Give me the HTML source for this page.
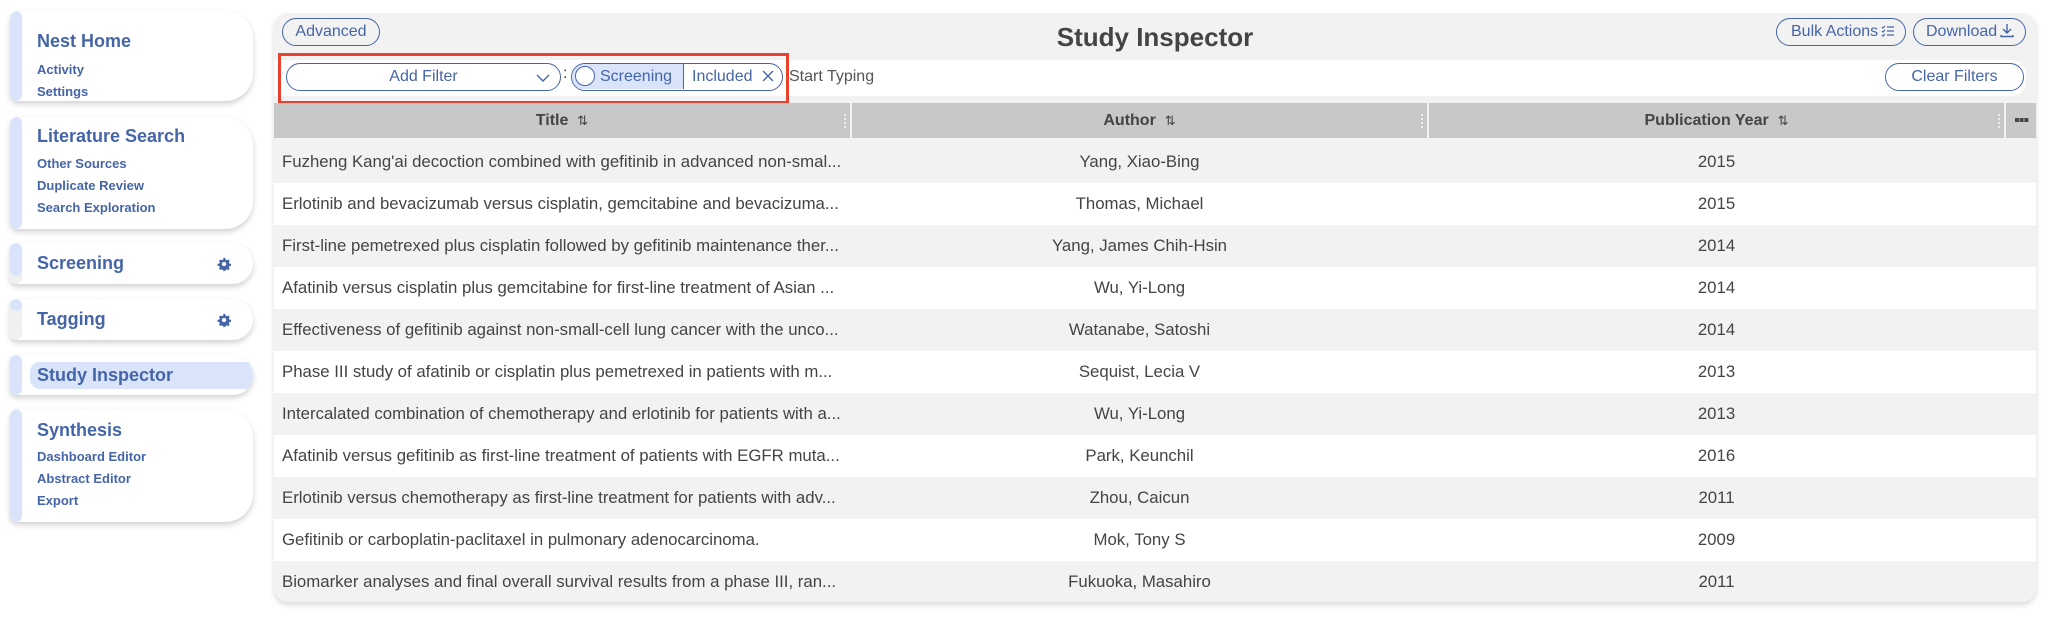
<!DOCTYPE html>
<html><head><meta charset="utf-8"><style>
*{box-sizing:border-box;margin:0;padding:0}
body{width:2048px;height:629px;background:#fff;font-family:"Liberation Sans",Arial,sans-serif;position:relative;overflow:hidden}
.card{position:absolute;left:10px;width:243px;background:#fff;border-radius:8px 28px 28px 8px;box-shadow:0 3px 6px rgba(0,0,0,.18);overflow:hidden}
.stripe{position:absolute;left:0;top:0;bottom:0;width:12px;background:#f0f0f0;border-radius:8px}
.stripe i{position:absolute;left:0;top:0;width:12px;background:#d9e4fb;border-radius:8px;display:block}
.card .t{position:absolute;left:27px;font-size:18px;font-weight:bold;color:#4565a8}
.card .s{position:absolute;left:27px;font-size:13px;font-weight:bold;color:#4565a8}
.gear{position:absolute;right:22px;width:14px;height:14px}
.main{position:absolute;left:274px;top:13px;width:1762px;height:589px;background:#f2f2f2;border-radius:14px;box-shadow:0 3px 6px rgba(0,0,0,.15);overflow:hidden}
.btn{position:absolute;border:1.5px solid #4565a8;border-radius:14px;color:#4565a8;font-size:16px;text-align:center;line-height:25px;white-space:nowrap}
.hdr{position:absolute;top:90px;height:35px;background:#c8c8c8;font-weight:bold;font-size:16px;color:#444;text-align:center;line-height:35px}
.row{position:absolute;left:0;width:1762px;height:42px;font-size:16.8px;color:#444;line-height:42px}
.row span{position:absolute;white-space:nowrap}
.c1{left:8px}
.c2{left:578px;width:575px;text-align:center}
.c3{left:1155px;width:575px;text-align:center}
.vd{position:absolute;top:11px;width:2px;height:14px;border-left:2px dotted #eee}
</style></head><body>

<div class="card" style="top:11px;height:90px"><div class="stripe"><i style="height:90px"></i></div>
<div class="t" style="top:20px">Nest Home</div><div class="s" style="top:51px">Activity</div><div class="s" style="top:73px">Settings</div></div>

<div class="card" style="top:117px;height:112px"><div class="stripe"><i style="height:112px"></i></div>
<div class="t" style="top:9px">Literature Search</div><div class="s" style="top:39px">Other Sources</div><div class="s" style="top:61px">Duplicate Review</div><div class="s" style="top:83px">Search Exploration</div></div>

<div class="card" style="top:243px;height:41px"><div class="stripe"><i style="height:33px"></i></div>
<div class="t" style="top:10px">Screening</div>
<svg class="gear" style="top:14px" viewBox="0 0 16 16"><path fill="#4565a8" d="M9.4 1l.4 2 1.3.7 1.9-.8 1.4 1.4-.8 1.9.7 1.3 2 .4v2l-2 .4-.7 1.3.8 1.9-1.4 1.4-1.9-.8-1.3.7-.4 2h-2l-.4-2-1.3-.7-1.9.8-1.4-1.4.8-1.9-.7-1.3-2-.4v-2l2-.4.7-1.3-.8-1.9 1.4-1.4 1.9.8 1.3-.7.4-2zM8 5.5a2.5 2.5 0 100 5 2.5 2.5 0 000-5z"/></svg></div>

<div class="card" style="top:299px;height:41px"><div class="stripe"><i style="height:12px"></i></div>
<div class="t" style="top:10px">Tagging</div>
<svg class="gear" style="top:14px" viewBox="0 0 16 16"><path fill="#4565a8" d="M9.4 1l.4 2 1.3.7 1.9-.8 1.4 1.4-.8 1.9.7 1.3 2 .4v2l-2 .4-.7 1.3.8 1.9-1.4 1.4-1.9-.8-1.3.7-.4 2h-2l-.4-2-1.3-.7-1.9.8-1.4-1.4.8-1.9-.7-1.3-2-.4v-2l2-.4.7-1.3-.8-1.9 1.4-1.4 1.9.8 1.3-.7.4-2zM8 5.5a2.5 2.5 0 100 5 2.5 2.5 0 000-5z"/></svg></div>

<div class="card" style="top:355px;height:40px"><div class="stripe"><i style="height:40px"></i></div>
<div style="position:absolute;left:20px;top:7px;width:227px;height:27px;background:#d9e4fb;border-radius:10px"></div>
<div class="t" style="top:10px">Study Inspector</div></div>

<div class="card" style="top:409px;height:113px"><div class="stripe"><i style="height:113px"></i></div>
<div class="t" style="top:11px">Synthesis</div><div class="s" style="top:40px">Dashboard Editor</div><div class="s" style="top:62px">Abstract Editor</div><div class="s" style="top:84px">Export</div></div>

<div class="main">
 <div class="btn" style="left:8px;top:5px;width:98px;height:28px">Advanced</div>
 <div style="position:absolute;left:0;width:1762px;top:9px;text-align:center;font-size:26px;font-weight:bold;color:#444">Study Inspector</div>
 <div class="btn" style="left:1502px;top:5px;width:130px;height:28px;text-align:left;padding-left:14px">Bulk Actions<svg width="14" height="14" viewBox="0 0 14 14" style="vertical-align:-2px;margin-left:3px"><path d="M1 3l1 1 2-2M1 7l1 1 2-2M1 11l1 1 2-2M6 3h7M6 7h7M6 11h7" stroke="#4565a8" stroke-width="1.2" fill="none"/></svg></div>
 <div class="btn" style="left:1639px;top:5px;width:113px;height:28px;text-align:left;padding-left:12px">Download<svg width="16" height="16" viewBox="0 0 16 16" style="vertical-align:-2px;margin-left:2px"><path d="M8 2v9M4 7l4 4 4-4M2 13v1.5h12V13" stroke="#4565a8" stroke-width="1.4" fill="none"/></svg></div>
 <div style="position:absolute;left:0;top:47px;width:1752px;height:36px;background:#fff;border-radius:0 14px 14px 0"></div>
 <div style="position:absolute;left:4px;top:40px;width:511px;height:51px;border:3px solid #e8412d"></div>
 <div class="btn" style="left:12px;top:50px;width:275px;height:28px;background:#fff">Add Filter<svg width="14" height="10" viewBox="0 0 14 10" style="position:absolute;right:10px;top:9px"><path d="M1 2l6 6 6-6" stroke="#4565a8" stroke-width="1.4" fill="none"/></svg></div>
 <div style="position:absolute;left:289px;top:52px;font-size:16px;color:#444">:</div>
 <div class="btn" style="left:297px;top:50px;width:212px;height:28px;background:#fff;overflow:hidden">
  <div style="position:absolute;left:0;top:0;width:112px;height:25px;background:#d9e4fb;border-right:1.5px solid #4565a8"></div>
  <div style="position:absolute;left:3px;top:2px;width:20px;height:20px;border:1.5px solid #4565a8;border-radius:50%;background:#fff"></div>
  <span style="position:absolute;left:28px">Screening</span>
  <span style="position:absolute;left:120px">Included</span>
  <svg width="14" height="14" viewBox="0 0 14 14" style="position:absolute;left:189px;top:5px"><path d="M2 2l10 10M12 2L2 12" stroke="#4565a8" stroke-width="1.3"/></svg></div>
 <div style="position:absolute;left:515px;top:55px;font-size:16px;color:#555">Start Typing</div>
 <div class="btn" style="left:1611px;top:50px;width:139px;height:28px">Clear Filters</div>

 <div class="hdr" style="left:0;width:576px">Title &nbsp;<span style="font-weight:normal;font-size:13px">⇅</span><span class="vd" style="right:4px"></span></div>
 <div class="hdr" style="left:578px;width:575px">Author &nbsp;<span style="font-weight:normal;font-size:13px">⇅</span><span class="vd" style="right:4px"></span></div>
 <div class="hdr" style="left:1155px;width:575px">Publication Year &nbsp;<span style="font-weight:normal;font-size:13px">⇅</span><span class="vd" style="right:4px"></span></div>
 <div class="hdr" style="left:1732px;width:30px;letter-spacing:-1px">▪▪▪</div>

 <div class="row" style="top:128px;background:#f2f2f2"><span class="c1">Fuzheng Kang'ai decoction combined with gefitinib in advanced non-smal...</span><span class="c2">Yang, Xiao-Bing</span><span class="c3">2015</span></div>
 <div class="row" style="top:170px;background:#fff"><span class="c1">Erlotinib and bevacizumab versus cisplatin, gemcitabine and bevacizuma...</span><span class="c2">Thomas, Michael</span><span class="c3">2015</span></div>
 <div class="row" style="top:212px;background:#f2f2f2"><span class="c1">First-line pemetrexed plus cisplatin followed by gefitinib maintenance ther...</span><span class="c2">Yang, James Chih-Hsin</span><span class="c3">2014</span></div>
 <div class="row" style="top:254px;background:#fff"><span class="c1">Afatinib versus cisplatin plus gemcitabine for first-line treatment of Asian ...</span><span class="c2">Wu, Yi-Long</span><span class="c3">2014</span></div>
 <div class="row" style="top:296px;background:#f2f2f2"><span class="c1">Effectiveness of gefitinib against non-small-cell lung cancer with the unco...</span><span class="c2">Watanabe, Satoshi</span><span class="c3">2014</span></div>
 <div class="row" style="top:338px;background:#fff"><span class="c1">Phase III study of afatinib or cisplatin plus pemetrexed in patients with m...</span><span class="c2">Sequist, Lecia V</span><span class="c3">2013</span></div>
 <div class="row" style="top:380px;background:#f2f2f2"><span class="c1">Intercalated combination of chemotherapy and erlotinib for patients with a...</span><span class="c2">Wu, Yi-Long</span><span class="c3">2013</span></div>
 <div class="row" style="top:422px;background:#fff"><span class="c1">Afatinib versus gefitinib as first-line treatment of patients with EGFR muta...</span><span class="c2">Park, Keunchil</span><span class="c3">2016</span></div>
 <div class="row" style="top:464px;background:#f2f2f2"><span class="c1">Erlotinib versus chemotherapy as first-line treatment for patients with adv...</span><span class="c2">Zhou, Caicun</span><span class="c3">2011</span></div>
 <div class="row" style="top:506px;background:#fff"><span class="c1">Gefitinib or carboplatin-paclitaxel in pulmonary adenocarcinoma.</span><span class="c2">Mok, Tony S</span><span class="c3">2009</span></div>
 <div class="row" style="top:548px;background:#f2f2f2"><span class="c1">Biomarker analyses and final overall survival results from a phase III, ran...</span><span class="c2">Fukuoka, Masahiro</span><span class="c3">2011</span></div>
</div>
</body></html>
